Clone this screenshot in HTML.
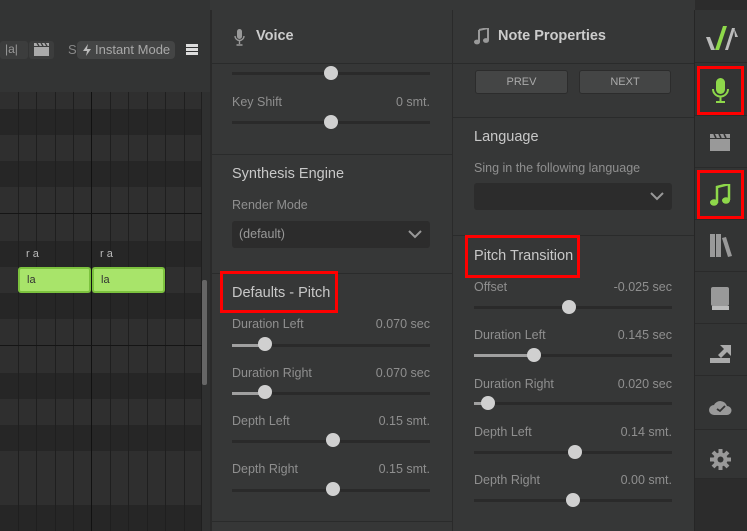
<!DOCTYPE html>
<html><head><meta charset="utf-8"><style>
*{margin:0;padding:0;box-sizing:border-box}
body{width:747px;height:531px;overflow:hidden;background:#363737;font-family:"Liberation Sans",sans-serif;position:relative;color:#9a9a9a}
.a{position:absolute}
.lbl{position:absolute;font-size:12.5px;color:#8f8f8f}
.val{position:absolute;font-size:12.5px;color:#8f8f8f;text-align:right}
.h{position:absolute;font-size:14.5px;color:#c8c8c8}
.trk{position:absolute;height:3px;background:#2a2a2a}
.fill{position:absolute;height:3px;background:#a0a0a0}
.knob{position:absolute;width:14px;height:14px;border-radius:50%;background:#d0d0d0}
.sep{position:absolute;height:1px;background:#2a2b2b}
.red{position:absolute;border:3px solid #f00}
.dd{position:absolute;background:#2c2c2c;border-radius:3px}
.cell{position:absolute;left:695px;width:52px;border-bottom:1px solid #2a2a2a}
.vl{position:absolute;top:92px;width:1px;height:439px;background:#1f1f1f}
.row{position:absolute;left:0;width:202px;height:26px;background:#262626}
</style></head><body>
<!-- left top bar -->
<div class="a" style="left:0;top:0;width:210px;height:92px;background:#333434"></div>
<div class="a" style="left:0;top:41px;width:28px;height:18px;background:#3c3d3d;border-radius:3px;font-size:12px;color:#999;padding:1px 0 0 5px">|a|</div>
<div class="a" style="left:29px;top:41px;width:25px;height:18px;background:#3c3d3d;border-radius:3px"></div>
<svg class="a" style="left:34px;top:43px" width="15" height="13" viewBox="0 0 15 13"><rect x="0" y="4" width="15" height="9" fill="#aaa"/><path d="M0 0h15v3H0z" fill="#aaa"/><path d="M3 0l2 3M7 0l2 3M11 0l2 3" stroke="#3c3d3d" stroke-width="1.4"/></svg>
<div class="a" style="left:68px;top:42px;font-size:13px;color:#888">S</div>
<div class="a" style="left:77px;top:41px;width:98px;height:18px;background:#444545;border-radius:4px;font-size:13px;color:#a8a8a8;padding:1px 0 0 18px">Instant Mode</div>
<svg class="a" style="left:82px;top:44px" width="10" height="12" viewBox="0 0 10 12"><path d="M6 0L1 7h4l-1 5 5-7H5z" fill="#bbb"/></svg>
<div class="a" style="left:186px;top:44px;width:12px;height:3px;background:#ddd;box-shadow:0 4px 0 #ddd,0 8px 0 #ddd"></div>
<!-- piano roll -->
<div class="a" style="left:0;top:92px;width:202px;height:439px;background:#2f2f2f"></div>
<div class="row" style="top:109px"></div>
<div class="row" style="top:161px"></div>
<div class="row" style="top:241px"></div>
<div class="row" style="top:293px"></div>
<div class="row" style="top:373px"></div>
<div class="row" style="top:425px"></div>
<div class="row" style="top:505px"></div>
<div class="vl" style="left:18px"></div><div class="vl" style="left:36px"></div><div class="vl" style="left:55px"></div><div class="vl" style="left:73px"></div>
<div class="vl" style="left:110px"></div><div class="vl" style="left:128px"></div><div class="vl" style="left:147px"></div><div class="vl" style="left:165px"></div><div class="vl" style="left:184px"></div><div class="vl" style="left:201px"></div>
<div class="a" style="left:91px;top:92px;width:1px;height:439px;background:#111"></div>
<div class="a" style="left:0;top:213px;width:202px;height:1px;background:#151515"></div>
<div class="a" style="left:0;top:345px;width:202px;height:1px;background:#151515"></div>
<div class="a" style="left:26px;top:248px;font-size:11px;color:#bbb">r a</div>
<div class="a" style="left:100px;top:248px;font-size:11px;color:#bbb">r a</div>
<div class="a" style="left:18px;top:267px;width:73px;height:26px;background:#a8e46a;border:2px solid #7cc23e;border-radius:3px;font-size:11px;color:#333;padding:5px 0 0 7px">la</div>
<div class="a" style="left:92px;top:267px;width:73px;height:26px;background:#a8e46a;border:2px solid #7cc23e;border-radius:3px;font-size:11px;color:#333;padding:5px 0 0 7px">la</div>
<div class="a" style="left:202px;top:92px;width:9px;height:439px;background:#2f3030"></div>
<div class="a" style="left:202px;top:280px;width:5px;height:105px;background:#666;border-radius:2px"></div>
<div class="a" style="left:210px;top:10px;width:2px;height:521px;background:#2a2a2a"></div>
<!-- middle panel -->
<svg class="a" style="left:234px;top:29px" width="11" height="17" viewBox="0 0 11 17"><rect x="3" y="0" width="5" height="10" rx="2.5" fill="#999"/><path d="M1 7a4.5 4.5 0 0 0 9 0M5.5 12v3M2.5 16h6" stroke="#999" stroke-width="1.4" fill="none"/></svg>
<div class="h" style="left:256px;top:28px;font-weight:bold;color:#ccc">Voice</div>
<div class="sep" style="left:211px;top:63px;width:241px"></div>
<div class="trk" style="left:232px;top:72px;width:198px"></div><div class="knob" style="left:324px;top:66px"></div>
<div class="lbl" style="left:232px;top:95px">Key Shift</div><div class="val" style="left:330px;top:95px;width:100px">0 smt.</div>
<div class="trk" style="left:232px;top:121px;width:198px"></div><div class="knob" style="left:324px;top:115px"></div>
<div class="sep" style="left:211px;top:154px;width:241px"></div>
<div class="h" style="left:232px;top:166px">Synthesis Engine</div>
<div class="lbl" style="left:232px;top:198px">Render Mode</div>
<div class="dd" style="left:232px;top:221px;width:198px;height:27px;font-size:12.5px;color:#999;padding:6px 0 0 7px">(default)</div>
<svg class="a" style="left:408px;top:230px" width="14" height="9"><path d="M1 1l6 6 6-6" stroke="#999" stroke-width="2" fill="none"/></svg>
<div class="sep" style="left:211px;top:273px;width:241px"></div>
<div class="red" style="left:220px;top:271px;width:118px;height:42px"></div>
<div class="h" style="left:232px;top:285px;color:#c8c8c8">Defaults - Pitch</div>
<div class="lbl" style="left:232px;top:317px">Duration Left</div><div class="val" style="left:330px;top:317px;width:100px">0.070 sec</div>
<div class="trk" style="left:232px;top:344px;width:198px"></div><div class="fill" style="left:232px;top:344px;width:30px"></div><div class="knob" style="left:258px;top:337px"></div>
<div class="lbl" style="left:232px;top:366px">Duration Right</div><div class="val" style="left:330px;top:366px;width:100px">0.070 sec</div>
<div class="trk" style="left:232px;top:392px;width:198px"></div><div class="fill" style="left:232px;top:392px;width:30px"></div><div class="knob" style="left:258px;top:385px"></div>
<div class="lbl" style="left:232px;top:414px">Depth Left</div><div class="val" style="left:330px;top:414px;width:100px">0.15 smt.</div>
<div class="trk" style="left:232px;top:440px;width:198px"></div><div class="knob" style="left:326px;top:433px"></div>
<div class="lbl" style="left:232px;top:462px">Depth Right</div><div class="val" style="left:330px;top:462px;width:100px">0.15 smt.</div>
<div class="trk" style="left:232px;top:489px;width:198px"></div><div class="knob" style="left:326px;top:482px"></div>
<div class="sep" style="left:211px;top:521px;width:241px"></div>
<div class="a" style="left:452px;top:10px;width:1px;height:521px;background:#2a2a2a"></div>
<!-- right panel -->
<svg class="a" style="left:474px;top:28px" width="15" height="17" viewBox="0 0 15 17"><path d="M5 2l9-2v12" stroke="#999" stroke-width="2" fill="none"/><path d="M5 2v12" stroke="#999" stroke-width="2"/><ellipse cx="3" cy="14" rx="3" ry="2.4" fill="#999"/><ellipse cx="12" cy="12.5" rx="3" ry="2.4" fill="#999"/></svg>
<div class="h" style="left:498px;top:28px;font-weight:bold;color:#ccc">Note Properties</div>
<div class="sep" style="left:453px;top:63px;width:241px"></div>
<div class="a" style="left:475px;top:70px;width:93px;height:24px;background:#444545;border:1px solid #2c2c2c;border-radius:3px;font-size:11px;color:#aaa;text-align:center;line-height:22px">PREV</div>
<div class="a" style="left:579px;top:70px;width:92px;height:24px;background:#444545;border:1px solid #2c2c2c;border-radius:3px;font-size:11px;color:#aaa;text-align:center;line-height:22px">NEXT</div>
<div class="sep" style="left:453px;top:117px;width:241px"></div>
<div class="h" style="left:474px;top:129px">Language</div>
<div class="lbl" style="left:474px;top:161px">Sing in the following language</div>
<div class="dd" style="left:474px;top:183px;width:198px;height:27px"></div>
<svg class="a" style="left:650px;top:192px" width="14" height="9"><path d="M1 1l6 6 6-6" stroke="#999" stroke-width="2" fill="none"/></svg>
<div class="sep" style="left:453px;top:235px;width:241px"></div>
<div class="red" style="left:465px;top:235px;width:115px;height:43px"></div>
<div class="h" style="left:474px;top:248px">Pitch Transition</div>
<div class="lbl" style="left:474px;top:280px">Offset</div><div class="val" style="left:572px;top:280px;width:100px">-0.025 sec</div>
<div class="trk" style="left:474px;top:306px;width:198px"></div><div class="knob" style="left:562px;top:300px"></div>
<div class="lbl" style="left:474px;top:328px">Duration Left</div><div class="val" style="left:572px;top:328px;width:100px">0.145 sec</div>
<div class="trk" style="left:474px;top:354px;width:198px"></div><div class="fill" style="left:474px;top:354px;width:58px"></div><div class="knob" style="left:527px;top:348px"></div>
<div class="lbl" style="left:474px;top:377px">Duration Right</div><div class="val" style="left:572px;top:377px;width:100px">0.020 sec</div>
<div class="trk" style="left:474px;top:402px;width:198px"></div><div class="fill" style="left:474px;top:402px;width:10px"></div><div class="knob" style="left:481px;top:396px"></div>
<div class="lbl" style="left:474px;top:425px">Depth Left</div><div class="val" style="left:572px;top:425px;width:100px">0.14 smt.</div>
<div class="trk" style="left:474px;top:451px;width:198px"></div><div class="knob" style="left:568px;top:445px"></div>
<div class="lbl" style="left:474px;top:473px">Depth Right</div><div class="val" style="left:572px;top:473px;width:100px">0.00 smt.</div>
<div class="trk" style="left:474px;top:499px;width:198px"></div><div class="knob" style="left:566px;top:493px"></div>
<!-- sidebar -->
<div class="a" style="left:694px;top:10px;width:1px;height:521px;background:#262626"></div>
<div class="a" style="left:695px;top:0;width:52px;height:531px;background:#2c2c2c"></div>
<div class="cell" style="top:10px;height:53px;background:#333434"></div>
<div class="cell" style="top:63px;height:53px;background:#333434"></div>
<div class="cell" style="top:116px;height:52px;background:#333434"></div>
<div class="cell" style="top:168px;height:52px;background:#333434"></div>
<div class="cell" style="top:220px;height:52px;background:#333434"></div>
<div class="cell" style="top:272px;height:52px;background:#333434"></div>
<div class="cell" style="top:324px;height:52px;background:#333434"></div>
<div class="cell" style="top:376px;height:54px;background:#333434"></div>
<div class="cell" style="top:430px;height:49px;background:#333434"></div>
<svg class="a" style="left:705px;top:25px" width="34" height="26" viewBox="0 0 34 26"><path d="M1 12l5 13h4L5 12z" fill="#bbb"/><path d="M10 25L18 1h4l-8 24z" fill="#8ed84a"/><path d="M20 25L27 3h3l-7 22z" fill="#bbb"/><path d="M29 3l4 9h-3z" fill="#bbb"/></svg>
<svg class="a" style="left:712px;top:78px" width="17" height="26" viewBox="0 0 17 26"><rect x="4" y="0" width="9" height="16" rx="4.5" fill="#8ed84a"/><path d="M1 11a7.5 7.5 0 0 0 15 0M8.5 19v4M4 24h9" stroke="#8ed84a" stroke-width="2" fill="none"/></svg>
<svg class="a" style="left:710px;top:134px" width="20" height="17" viewBox="0 0 20 17"><rect x="0" y="5" width="20" height="12" fill="#999"/><rect x="0" y="0" width="20" height="4" fill="#999"/><path d="M4 0l2 4M9 0l2 4M14 0l2 4" stroke="#333" stroke-width="1.6"/></svg>
<svg class="a" style="left:710px;top:184px" width="21" height="22" viewBox="0 0 21 22"><path d="M7 19V3l12-3v16" stroke="#8ed84a" stroke-width="2.5" fill="none"/><ellipse cx="4" cy="18.5" rx="4" ry="3.2" fill="#8ed84a"/><ellipse cx="16" cy="16.5" rx="4" ry="3.2" fill="#8ed84a"/></svg>
<svg class="a" style="left:710px;top:234px" width="22" height="23" viewBox="0 0 22 23"><rect x="0" y="0" width="5" height="23" fill="#999"/><rect x="6" y="0" width="5" height="23" fill="#999"/><path d="M12 4l4-1 6 19-4 1z" fill="#999"/></svg>
<svg class="a" style="left:711px;top:287px" width="18" height="23" viewBox="0 0 18 23"><rect x="0" y="0" width="18" height="19" rx="2" fill="#999"/><rect x="1" y="19" width="17" height="4" fill="#bbb"/></svg>
<svg class="a" style="left:710px;top:342px" width="22" height="22" viewBox="0 0 22 22"><path d="M10 3h11v11l-4-4-6 6-3-3 6-6z" fill="#aaa"/><rect x="0" y="16" width="20" height="5" fill="#aaa"/></svg>
<svg class="a" style="left:709px;top:398px" width="23" height="17" viewBox="0 0 23 17"><path d="M5 17a5 5 0 0 1 0-10a7 7 0 0 1 13 1a4.5 4.5 0 0 1 0 9z" fill="#999"/><path d="M8 11l3 2 5-5" stroke="#333" stroke-width="1.8" fill="none"/></svg>
<svg class="a" style="left:710px;top:449px" width="21" height="21" viewBox="0 0 21 21"><circle cx="10.5" cy="10.5" r="7" fill="#999"/><g stroke="#999" stroke-width="4"><path d="M10.5 0v21M0 10.5h21M3 3l15 15M18 3L3 18"/></g><circle cx="10.5" cy="10.5" r="3" fill="#333434"/></svg>
<div class="red" style="left:697px;top:66px;width:47px;height:49px"></div>
<div class="red" style="left:697px;top:170px;width:47px;height:49px"></div>
</body></html>
